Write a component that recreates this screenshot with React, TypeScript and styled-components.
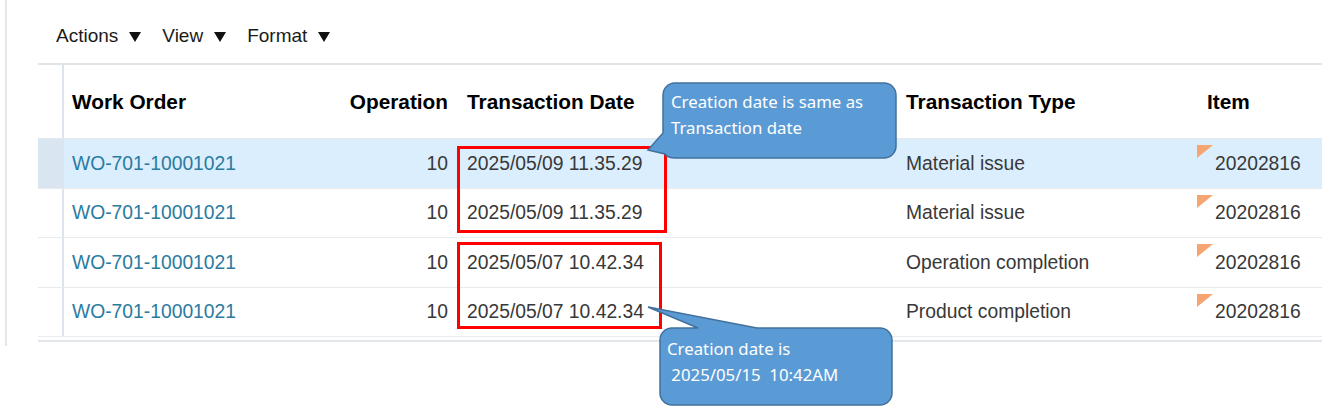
import styled, { createGlobalStyle } from "styled-components"

const GlobalStyle = createGlobalStyle`
  html, body {
    margin: 0;
    padding: 0;
    background: #ffffff;
  }
  body {
    font-family: "Liberation Sans", Arial, sans-serif;
    color: #333333;
  }
`

const Page = styled.div`
  position: relative;
  width: 1322px;
  height: 410px;
  overflow: hidden;
`

const Frame = styled.div`
  margin-left: 5px;
  height: 346px;
  border-left: 2px solid #e3e6ea;
`

const Toolbar = styled.div`
  display: flex;
  align-items: center;
  gap: 21px;
  height: 63px;
  box-sizing: border-box;
  padding: 8px 0 0 49px;
`

const MenuItem = styled.span`
  display: inline-flex;
  align-items: center;
  gap: 11px;
  font-size: 19px;
  color: #1a1a1a;
`

const Caret = styled.span`
  width: 0;
  height: 0;
  border-left: 6px solid transparent;
  border-right: 6px solid transparent;
  border-top: 10px solid #111111;
  margin-top: 2px;
`

const Table = styled.div`
  margin-left: 31px;
`

const columns = "26px 246px 147px 440px 300px 1fr"

const HeaderRow = styled.div`
  display: grid;
  grid-template-columns: ${columns};
  height: 76px;
  box-sizing: border-box;
  border-top: 2px solid #e1e5ea;
  border-bottom: 1px solid #e4e8ec;
`

const Row = styled.div<{ $selected?: boolean }>`
  display: grid;
  grid-template-columns: ${columns};
  height: 49.5px;
  box-sizing: border-box;
  border-bottom: 1px solid #e8ebee;
  background: ${({ $selected }) => ($selected ? "#dbeefd" : "#ffffff")};
`

const SelectorCell = styled.div<{ $selected?: boolean }>`
  border-right: 2px solid #dde3ea;
  background: ${({ $selected }) => ($selected ? "#d9e6f2" : "transparent")};
`

const HeadCell = styled.div<{ $right?: boolean; $pad?: number }>`
  display: flex;
  align-items: center;
  justify-content: ${({ $right }) => ($right ? "flex-end" : "flex-start")};
  padding: ${({ $right, $pad = 8 }) => ($right ? `0 9px 0 0` : `0 0 0 ${$pad}px`)};
  font-size: 20.8px;
  font-weight: 700;
  color: #000000;
  white-space: nowrap;
`

const Cell = styled.div<{ $right?: boolean; $link?: boolean; $pad?: number }>`
  position: relative;
  display: flex;
  align-items: center;
  justify-content: ${({ $right }) => ($right ? "flex-end" : "flex-start")};
  padding: ${({ $right, $pad = 8 }) => ($right ? "0 9px 0 0" : `0 0 0 ${$pad}px`)};
  padding-top: 1px;
  font-size: 19.3px;
  color: ${({ $link }) => ($link ? "#2a7ba0" : "#383838")};
  white-space: nowrap;
`

const Marker = styled.span`
  position: absolute;
  left: 0;
  top: 6px;
  width: 0;
  height: 0;
  border-top: 13px solid #f6a572;
  border-right: 16px solid transparent;
`

const TableEnd = styled.div`
  margin-top: 3px;
  border-top: 2px solid #e3e7ec;
`

const RedBox = styled.div<{ $x: number; $y: number; $w: number; $h: number }>`
  position: absolute;
  left: ${({ $x }) => $x}px;
  top: ${({ $y }) => $y}px;
  width: ${({ $w }) => $w}px;
  height: ${({ $h }) => $h}px;
  box-sizing: border-box;
  border: 3px solid #ff0000;
`

const CalloutShape = styled.svg<{ $x: number; $y: number }>`
  position: absolute;
  left: ${({ $x }) => $x}px;
  top: ${({ $y }) => $y}px;
  overflow: visible;
`

const CalloutText = styled.div<{ $x: number; $y: number }>`
  position: absolute;
  left: ${({ $x }) => $x}px;
  top: ${({ $y }) => $y}px;
  font-family: "Noto Sans", "Noto Sans CJK JP", sans-serif;
  font-size: 16.8px;
  line-height: 26px;
  color: #ffffff;
  white-space: pre;
`

type Tx = { op: string; date: string; type: string }

const rows: Tx[] = [
  { op: "10", date: "2025/05/09 11.35.29", type: "Material issue" },
  { op: "10", date: "2025/05/09 11.35.29", type: "Material issue" },
  { op: "10", date: "2025/05/07 10.42.34", type: "Operation completion" },
  { op: "10", date: "2025/05/07 10.42.34", type: "Product completion" },
]

export default function App() {
  return (
    <>
      <GlobalStyle />
      <Page>
        <Frame>
          <Toolbar>
            {["Actions", "View", "Format"].map((m) => (
              <MenuItem key={m}>
                {m}
                <Caret />
              </MenuItem>
            ))}
          </Toolbar>

          <Table>
            <HeaderRow>
              <SelectorCell />
              <HeadCell>Work Order</HeadCell>
              <HeadCell $right>Operation</HeadCell>
              <HeadCell $pad={10}>Transaction Date</HeadCell>
              <HeadCell $pad={9}>Transaction Type</HeadCell>
              <HeadCell $pad={10}>Item</HeadCell>
            </HeaderRow>
            {rows.map((r, i) => (
              <Row key={i} $selected={i === 0}>
                <SelectorCell $selected={i === 0} />
                <Cell $link>WO-701-10001021</Cell>
                <Cell $right>{r.op}</Cell>
                <Cell $pad={10}>{r.date}</Cell>
                <Cell $pad={9}>{r.type}</Cell>
                <Cell $pad={18}>
                  <Marker />
                  20202816
                </Cell>
              </Row>
            ))}
            <TableEnd />
          </Table>
        </Frame>

        <RedBox $x={457} $y={146} $w={210} $h={87} />
        <RedBox $x={457} $y={242} $w={205} $h={87} />

        <CalloutShape $x={640} $y={80} width={260} height={82} viewBox="0 0 260 82">
          <path
            d="M35 3 H244 A12 12 0 0 1 256 15 V66 A12 12 0 0 1 244 78 H35 Q28 78 25 74 L8 70 L23 53 V15 A12 12 0 0 1 35 3 Z"
            fill="#5b9bd5"
            stroke="#41719c"
            strokeWidth="1.5"
          />
        </CalloutShape>
        <CalloutText $x={671} $y={89}>
          {"Creation date is same as\nTransaction date"}
        </CalloutText>

        <CalloutShape $x={640} $y={300} width={260} height={110} viewBox="0 0 260 110">
          <path
            d="M32 28 H58 L8 7 L117 28 H240 A12 12 0 0 1 252 40 V93 A12 12 0 0 1 240 105 H32 A12 12 0 0 1 20 93 V40 A12 12 0 0 1 32 28 Z"
            fill="#5b9bd5"
            stroke="#41719c"
            strokeWidth="1.5"
          />
        </CalloutShape>
        <CalloutText $x={667} $y={336}>
          {"Creation date is\n 2025/05/15  10:42AM"}
        </CalloutText>
      </Page>
    </>
  )
}
